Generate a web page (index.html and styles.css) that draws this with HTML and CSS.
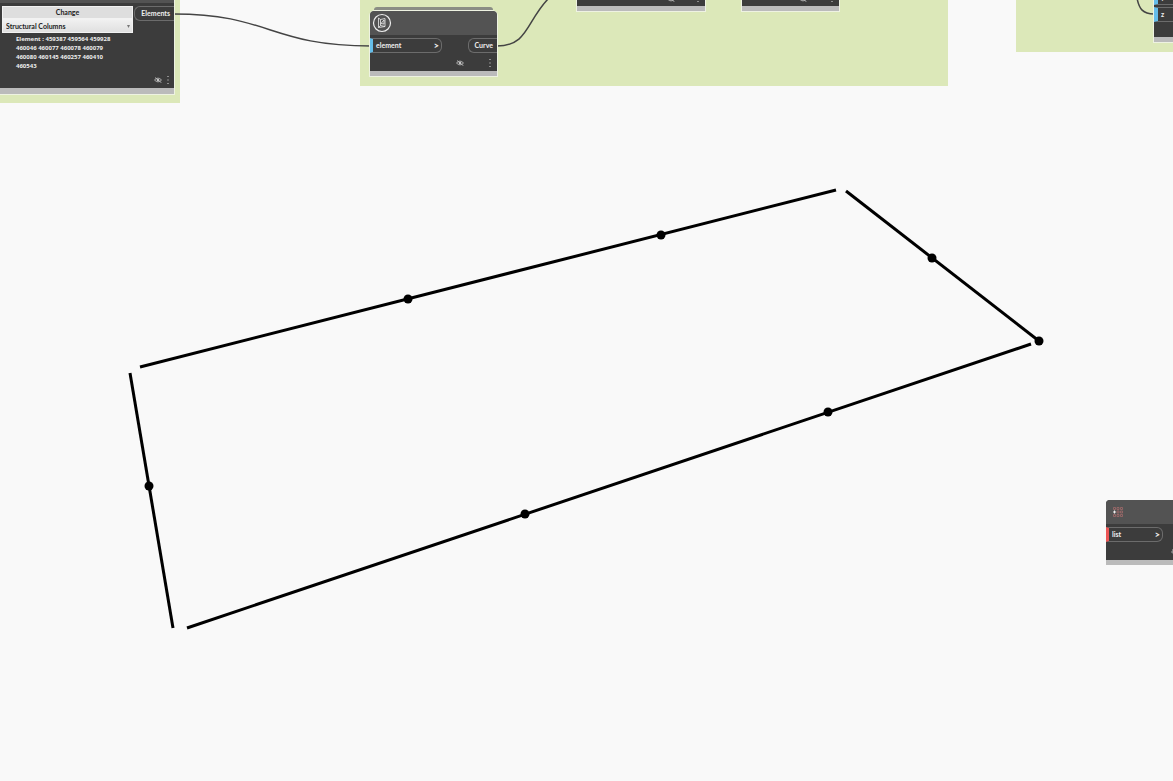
FILE: index.html
```
<!DOCTYPE html>
<html lang="en">
<head>
    <meta charset="UTF-8">
    <meta name="viewport" content="width=device-width, initial-scale=1.0">
    <title>Node Graph</title>
    <link rel="stylesheet" href="styles.css">
</head>
<body>
    <!-- Shared icons -->
    <svg class="symbols" aria-hidden="true">
        <symbol id="eye" viewBox="0 0 8 6">
            <path d="M.5 3Q4-.8 7.500 3Q4 6.800.5 3M1 .5L7.500 5.800" fill="none" stroke="#c4c4c4" stroke-width=".8"/>
            <circle cx="4" cy="3" r="1.300" fill="#c4c4c4"/>
        </symbol>
        <symbol id="dots" viewBox="0 0 2 8">
            <path d="M0 .5h2M0 4h2M0 7.500h2" stroke="#8c8c8c"/>
        </symbol>
    </svg>

    <main class="canvas">
        <!-- Groups -->
        <div class="group group-select"></div>
        <div class="group group-curve"></div>
        <div class="group group-point"></div>

        <!-- Wires -->
        <svg class="layer">
            <g fill="none" stroke="#444" stroke-width="1.500">
                <path d="M174 14C270 14 270 46 371 46"/>
                <path d="M497 46C528 46 526 22 548 -1"/>
                <path d="M1137 -2C1139 9 1143 14 1154 14"/>
            </g>
        </svg>

        <!-- Nodes -->
        <section class="node node-select">
            <div class="node-header"></div>
            <div class="node-body">
                <div class="picker">
                    <button type="button" class="change">Change</button>
                    <div class="select-wrap">
                        <select class="category" aria-label="Category">
                            <option>Structural Columns</option>
                        </select>
                        <svg class="arrow" viewBox="0 0 3 4"><path d="M0 1h3L1.500 4z" fill="#777"/></svg>
                    </div>
                    <p class="elements">Element : 459387 459564 459928 460046 460077 460078 460079 460080 460145 460257 460410 460543</p>
                </div>
                <span class="port port-out">Elements</span>
            </div>
            <div class="node-tools">
                <button type="button" class="tool" aria-label="Preview"><svg class="eye"><use href="#eye"/></svg></button>
                <button type="button" class="tool" aria-label="Menu"><svg class="dots"><use href="#dots"/></svg></button>
            </div>
            <div class="node-footer"></div>
        </section>

        <section class="node stacked node-curve">
            <div class="node-header">
                <svg class="revit" viewBox="0 0 20 20" fill="none" stroke="#eee">
                    <circle cx="10" cy="10" r="8.500" stroke-width="1.200"/>
                    <path d="M6.500 5L8.500 6.500v6L6.500 14.500zM8.500 6.500L13 5.500v8L8.500 12.500M6.500 14.500L13 13.500M9 10.500l3-3.500v4L9 10.500" stroke-width=".8"/>
                </svg>
            </div>
            <div class="node-ports">
                <span class="port port-in">element <b>&gt;</b></span>
                <span class="port port-out">Curve</span>
            </div>
            <div class="node-tools">
                <button type="button" class="tool" aria-label="Preview"><svg class="eye"><use href="#eye"/></svg></button>
                <button type="button" class="tool" aria-label="Menu"><svg class="dots"><use href="#dots"/></svg></button>
            </div>
            <div class="node-footer"></div>
        </section>

        <section class="node node-start">
            <div class="node-tools">
                <button type="button" class="tool" aria-label="Preview"><svg class="eye"><use href="#eye"/></svg></button>
                <button type="button" class="tool" aria-label="Menu"><svg class="dots"><use href="#dots"/></svg></button>
            </div>
            <div class="node-footer"></div>
        </section>

        <section class="node node-end">
            <div class="node-tools">
                <button type="button" class="tool" aria-label="Preview"><svg class="eye"><use href="#eye"/></svg></button>
                <button type="button" class="tool" aria-label="Menu"><svg class="dots"><use href="#dots"/></svg></button>
            </div>
            <div class="node-footer"></div>
        </section>

        <section class="node node-point">
            <div class="axes">
                <span class="port port-in">y</span>
                <span class="port port-in">z</span>
            </div>
            <div class="node-footer"></div>
        </section>

        <section class="node node-list">
            <div class="node-header">
                <svg class="grid" viewBox="0 0 10 10">
                    <g fill="none" stroke="#a16a6a" stroke-width=".8">
                        <path d="M.5.5h2v2h-2zM4 .5h2v2H4zM7.500.5h2v2h-2zM4 4h2v2H4zM7.500 4h2v2h-2zM.5 7.500h2v2h-2zM4 7.500h2v2H4zM7.500 7.500h2v2h-2z"/>
                    </g>
                    <path d="M0 5h3M1.500 3.500v3" stroke="#eee"/>
                </svg>
            </div>
            <div class="node-ports">
                <span class="port port-in port-missing">list <b>&gt;</b></span>
            </div>
            <div class="node-tools">
                <button type="button" class="tool" aria-label="Preview"><svg class="eye"><use href="#eye"/></svg></button>
            </div>
            <div class="node-footer"></div>
        </section>

        <!-- Geometry preview -->
        <svg class="layer">
            <g stroke="#000" stroke-width="3">
                <path d="M140 367L836 190"/>
                <path d="M846 191L1039 341"/>
                <path d="M1031 344L187 628"/>
                <path d="M130 373L173 628"/>
            </g>
            <circle cx="408" cy="299" r="4.500"/>
            <circle cx="661" cy="235" r="4.500"/>
            <circle cx="932" cy="258" r="4.500"/>
            <circle cx="1039" cy="341" r="4.500"/>
            <circle cx="828" cy="412" r="4.500"/>
            <circle cx="525" cy="514" r="4.500"/>
            <circle cx="149" cy="486" r="4.500"/>
        </svg>
    </main>
</body>
</html>
```
FILE: styles.css
```
body {
    margin: 0;
    font-family: Lato, sans-serif;
    font-size: 7px;
    font-weight: bold;
    line-height: 9px;
    color: #eee;
}
button, select {
    font: inherit;
    margin: 0;
}
.symbols {
    display: none;
}
.canvas {
    position: relative;
    height: 100vh;
    overflow: hidden;
    background-color: #f9f9f9;
}
.layer {
    position: absolute;
    top: 0;
    left: 0;
    width: 100%;
    height: 100%;
    pointer-events: none;
}

/* Groups */
.group {
    position: absolute;
    top: -20px;
    background-color: #dce8b9;
}
.group-select {
    left: -20px;
    width: 200px;
    height: 123px;
}
.group-curve {
    left: 360px;
    width: 588px;
    height: 106px;
}
.group-point {
    left: 1016px;
    width: 200px;
    height: 72px;
}

/* Nodes */
.node {
    position: absolute;
    display: flex;
    flex-direction: column;
    background-color: #3c3c3c;
    box-shadow: 0 0 0 1px #eef2e2;
}
.node-select {
    left: -20px;
    top: -21px;
    width: 194px;
}
.node-curve {
    left: 370px;
    top: 11px;
    width: 127px;
    border-radius: 5px 5px 0 0;
}
.node-start {
    left: 577px;
    top: -20px;
    width: 128px;
}
.node-end {
    left: 742px;
    top: -20px;
    width: 97px;
}
.node-point {
    left: 1154px;
    top: -10px;
    width: 100px;
}
.node-list {
    left: 1106px;
    top: 500px;
    width: 97px;
    border-radius: 4px 4px 0 0;
    box-shadow: none;
}
/* Cards behind a node that runs on a list */
.stacked::before {
    content: "";
    position: absolute;
    left: 4px;
    right: 4px;
    top: -4px;
    height: 3px;
    background-color: #8a8d84;
    border-radius: 5px 5px 0 0;
}
.node-header {
    display: flex;
    align-items: center;
    height: 24px;
    background-color: #535353;
    border-radius: 4px 4px 0 0;
}
.node-footer {
    height: 5px;
    background-color: #bbb;
}
.node-select .node-footer {
    height: 6px;
}
.revit {
    width: 20px;
    height: 20px;
    margin-left: 2px;
}
.grid {
    width: 10px;
    height: 10px;
    margin-left: 7px;
}

/* Ports */
.node-ports {
    display: flex;
    justify-content: space-between;
    padding-top: 3px;
}
.port {
    display: flex;
    align-items: center;
    justify-content: space-between;
    box-sizing: border-box;
    height: 15px;
    border: 1px solid #6c6c6c;
}
.port-in {
    width: 72px;
    padding: 0 2px 0 3px;
    border-left: 3px solid #65bde9;
    border-radius: 0 6px 6px 0;
}
.port-in b {
    font-size: 9px;
}
.port-missing {
    width: 57px;
    border-left-color: #eb5555;
}
.port-out {
    padding: 0 4px 0 6px;
    border-right: none;
    border-radius: 6px 0 0 6px;
}

/* Footer buttons */
.node-tools {
    display: flex;
    align-items: center;
    justify-content: flex-end;
    gap: 5px;
    height: 18px;
    padding-top: 2px;
    padding-right: 5px;
    box-sizing: border-box;
}
.tool {
    display: flex;
    padding: 0;
    border: none;
    background: none;
    cursor: pointer;
}
.eye {
    width: 8px;
    height: 6px;
}
.dots {
    width: 2px;
    height: 8px;
}
.node-curve .node-tools {
    gap: 25px;
    padding-right: 6px;
}
.node-start .node-tools,
.node-end .node-tools {
    height: 26px;
    align-items: flex-end;
    gap: 22px;
    padding-right: 6px;
    padding-bottom: 4px;
}
.node-end .node-tools {
    gap: 24px;
}
.node-list .node-tools {
    padding-right: 24px;
}

/* Category selection */
.node-body {
    display: flex;
    justify-content: space-between;
    align-items: flex-start;
    height: 67px;
    padding: 3px 0 0 22px;
    box-sizing: border-box;
}
.picker {
    width: 131px;
}
.change {
    display: block;
    width: 100%;
    height: 13px;
    padding: 0;
    border: 1px solid #f2f2f2;
    background-color: #dedede;
    color: #222;
    cursor: pointer;
}
.select-wrap {
    position: relative;
}
.category {
    display: block;
    width: 100%;
    height: 14px;
    padding: 0 3px;
    border: 1px solid #f2f2f2;
    border-radius: 0;
    background: linear-gradient(#f0f0f0, #e0e0e0);
    color: #222;
    appearance: none;
}
.arrow {
    position: absolute;
    right: 3px;
    top: 5px;
    width: 3px;
    height: 4px;
}
.elements {
    width: 104px;
    margin: 2px 0 0 14px;
    font-family: "Noto Sans", sans-serif;
    font-size: 6px;
}

.axes {
    display: flex;
    flex-direction: column;
    gap: 2px;
    height: 47px;
    box-sizing: border-box;
}
.axes .port-in {
    width: 100%;
    border-left-width: 4px;
}
```
